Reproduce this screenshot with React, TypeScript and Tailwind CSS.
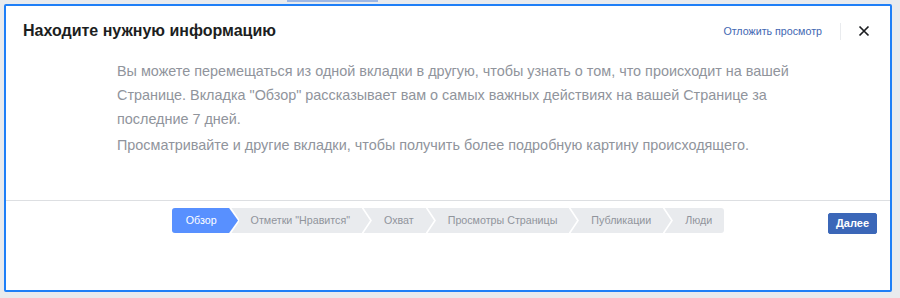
import React from "react";

const tabs = ['Отметки "Нравится"', "Охват", "Просмотры Страницы", "Публикации", "Люди"];

function Chevron() {
  return (
    <svg width="10" height="25" viewBox="0 0 10 25" className="block shrink-0">
      <polyline points="0,-1 9,12.5 0,26" fill="none" stroke="#ffffff" strokeWidth="1.6" />
    </svg>
  );
}

function BlueArrow() {
  return (
    <svg width="10" height="25" viewBox="0 0 10 25" className="block shrink-0">
      <polyline points="0.8,-1 9.8,12.5 0.8,26" fill="none" stroke="#ffffff" strokeWidth="1.6" />
      <polygon points="0,0 9,12.5 0,25" fill="#5890ff" />
    </svg>
  );
}

export default function App() {
  return (
    <div
      className="w-[900px] h-[298px] bg-[#e9ebee] pt-[4px] pl-[4px] relative"
      style={{ fontFamily: '"Liberation Sans", Arial, sans-serif' }}
    >
      <div className="absolute top-0 left-[287px] w-[91px] h-[2px] bg-[#9db7e4]" />
      <div className="w-[888px] h-[288px] bg-white border-2 border-[#1f7ff7] rounded-[2px] flex flex-col">
        {/* header */}
        <div className="flex items-center pl-[17px] pr-[20px] pt-[15px]">
          <div className="text-[16px] leading-[20px] font-bold text-[#1c1e21]">Находите нужную информацию</div>
          <div className="ml-auto flex items-center">
            <span className="text-[10.7px] leading-[16px] text-[#4267b2]">Отложить просмотр</span>
            <span className="w-px h-[17px] bg-[#e9ebee] ml-[18px] mr-[17px]" />
            <svg width="12" height="12" viewBox="0 0 12 12" className="block">
              <path d="M1.5 1.5 L10.5 10.5 M10.5 1.5 L1.5 10.5" stroke="#1c1e21" strokeWidth="1.7" fill="none" />
            </svg>
          </div>
        </div>
        {/* body */}
        <div className="flex-1 pl-[111px] pt-[18px]">
          <div className="w-[705px] text-[14.4px] leading-[24px] text-[#90949c]">
            <p>
              Вы можете перемещаться из одной вкладки в другую, чтобы узнать о том, что происходит на вашей
              Странице. Вкладка "Обзор" рассказывает вам о самых важных действиях на вашей Странице за
              последние 7 дней.
            </p>
            <p className="mt-[2px]">
              Просматривайте и другие вкладки, чтобы получить более подробную картину происходящего.
            </p>
          </div>
        </div>
        {/* footer */}
        <div className="h-[90px] border-t border-[#dddfe2] grid grid-cols-[1fr_auto_1fr] items-start px-[13px] pt-[7px]">
          <div />
          <div className="flex h-[25px] bg-[#e9ebee] rounded-[3px] text-[10.7px] text-[#90949c]">
            <div className="flex items-center bg-[#5890ff] text-white pl-[14px] pr-[12px] rounded-l-[3px]">Обзор</div>
            <BlueArrow />
            {tabs.map((t, i) => (
              <React.Fragment key={t}>
                <div className="flex items-center px-[12px] whitespace-nowrap">{t}</div>
                {i < tabs.length - 1 && <Chevron />}
              </React.Fragment>
            ))}
          </div>
          <div className="justify-self-end pt-[2px]">
            <button className="h-[21px] w-[49px] rounded-[2px] bg-[#3b67b8] border border-[#3b67b8] text-white text-[11px] font-bold leading-[19px]">
              Далее
            </button>
          </div>
        </div>
      </div>
    </div>
  );
}
